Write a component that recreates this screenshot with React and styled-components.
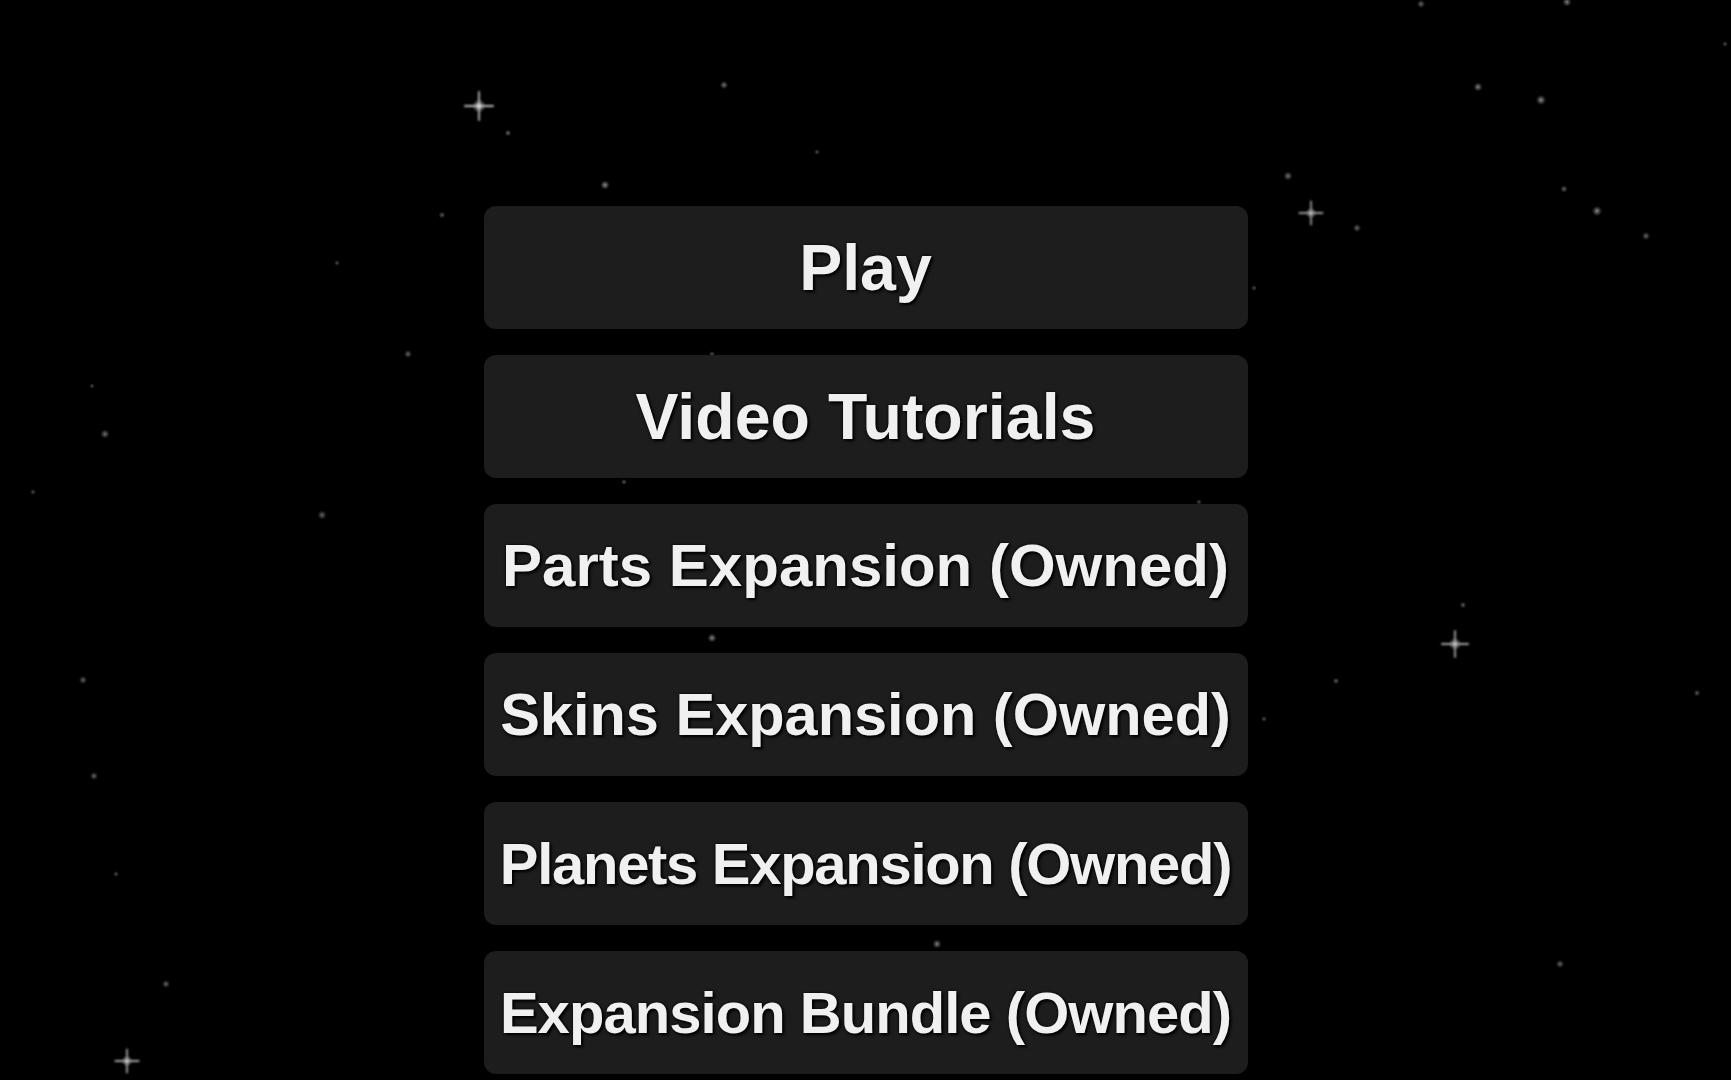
import React from 'react';
import styled, { createGlobalStyle } from 'styled-components';

const GlobalStyle = createGlobalStyle`
  html, body {
    margin: 0;
    padding: 0;
    background: #000;
    overflow: hidden;
  }
`;

const Screen = styled.div`
  position: relative;
  width: 100vw;
  height: 100vh;
  background: #000;
  overflow: hidden;
  font-family: "Liberation Sans", Arial, sans-serif;
`;

const Sky = styled.svg`
  position: absolute;
  inset: 0;
  width: 100%;
  height: 100%;
  pointer-events: none;
`;

const Menu = styled.nav`
  position: relative;
  display: flex;
  flex-direction: column;
  align-items: center;
  gap: 26px;
  padding-top: 206px;
`;

const MenuButton = styled.button`
  width: 764px;
  height: 123px;
  flex-shrink: 0;
  display: flex;
  align-items: center;
  justify-content: center;
  padding: 0;
  border: none;
  border-radius: 12px;
  background: #1d1d1d;
  color: #f0f0f0;
  font-family: inherit;
  font-weight: bold;
  font-size: ${p => p.$size}px;
  letter-spacing: ${p => p.$tracking || 0}px;
  white-space: nowrap;
  text-shadow: 2px 2px 3px #000, 0 0 3px #000;
  filter: blur(0.6px);
  cursor: pointer;
`;

// x, y, radius, brightness, cross flare
const stars = [
  [479, 106, 3, 0.85, true],
  [508, 133, 1.5, 0.4],
  [605, 185, 2, 0.55],
  [724, 85, 1.8, 0.45],
  [442, 215, 1.5, 0.35],
  [337, 263, 1.3, 0.3],
  [408, 354, 1.8, 0.4],
  [92, 386, 1.2, 0.3],
  [105, 434, 2, 0.45],
  [33, 492, 1.3, 0.3],
  [322, 515, 2, 0.4],
  [83, 680, 1.8, 0.4],
  [94, 776, 1.8, 0.4],
  [116, 874, 1.3, 0.3],
  [166, 984, 1.8, 0.4],
  [127, 1061, 2.5, 0.75, true],
  [1421, 4, 1.8, 0.4],
  [1567, 2, 2, 0.5],
  [1478, 87, 2, 0.5],
  [1541, 100, 2.2, 0.55],
  [1725, 44, 1.3, 0.3],
  [1288, 176, 2, 0.45],
  [1311, 213, 2.5, 0.7, true],
  [1357, 228, 1.8, 0.4],
  [1564, 189, 1.6, 0.4],
  [1597, 211, 2.2, 0.55],
  [1646, 236, 1.8, 0.4],
  [1254, 288, 1.3, 0.3],
  [1463, 605, 1.5, 0.35],
  [1455, 644, 2.8, 0.75, true],
  [1336, 681, 1.5, 0.35],
  [1697, 693, 1.5, 0.35],
  [1560, 964, 1.8, 0.4],
  [817, 152, 1.3, 0.3],
  [712, 354, 1.3, 0.35],
  [624, 482, 1.3, 0.35],
  [712, 638, 2, 0.5],
  [937, 944, 2, 0.5],
  [1199, 502, 1.3, 0.3],
  [1264, 719, 1.3, 0.3],
];

const StarField = () => (
  <Sky viewBox="0 0 1731 1080" preserveAspectRatio="none">
    <defs>
      <radialGradient id="glow">
        <stop offset="0%" stopColor="#fff" stopOpacity="1" />
        <stop offset="40%" stopColor="#ddd" stopOpacity="0.6" />
        <stop offset="100%" stopColor="#999" stopOpacity="0" />
      </radialGradient>
      <filter id="soft" x="-50%" y="-50%" width="200%" height="200%">
        <feGaussianBlur stdDeviation="1.2" />
      </filter>
    </defs>
    {stars.map(([x, y, r, a, flare], i) => (
      <g key={i} opacity={a}>
        {flare && (
          <g filter="url(#soft)" fill="#ddd">
            <rect x={x - r * 5} y={y - 0.9} width={r * 10} height={1.8} rx={0.9} />
            <rect x={x - 0.9} y={y - r * 5} width={1.8} height={r * 10} ry={0.9} />
          </g>
        )}
        <circle cx={x} cy={y} r={r * 2.4} fill="url(#glow)" />
      </g>
    ))}
  </Sky>
);

const items = [
  { label: 'Play', size: 64.5 },
  { label: 'Video Tutorials', size: 64.5 },
  { label: 'Parts Expansion (Owned)', size: 60 },
  { label: 'Skins Expansion (Owned)', size: 59.5 },
  { label: 'Planets Expansion (Owned)', size: 58, tracking: -1.3 },
  { label: 'Expansion Bundle (Owned)', size: 58, tracking: -0.95 },
];

export default function App() {
  return (
    <Screen>
      <GlobalStyle />
      <StarField />
      <Menu>
        {items.map(({ label, size, tracking }) => (
          <MenuButton key={label} $size={size} $tracking={tracking}>
            {label}
          </MenuButton>
        ))}
      </Menu>
    </Screen>
  );
}
